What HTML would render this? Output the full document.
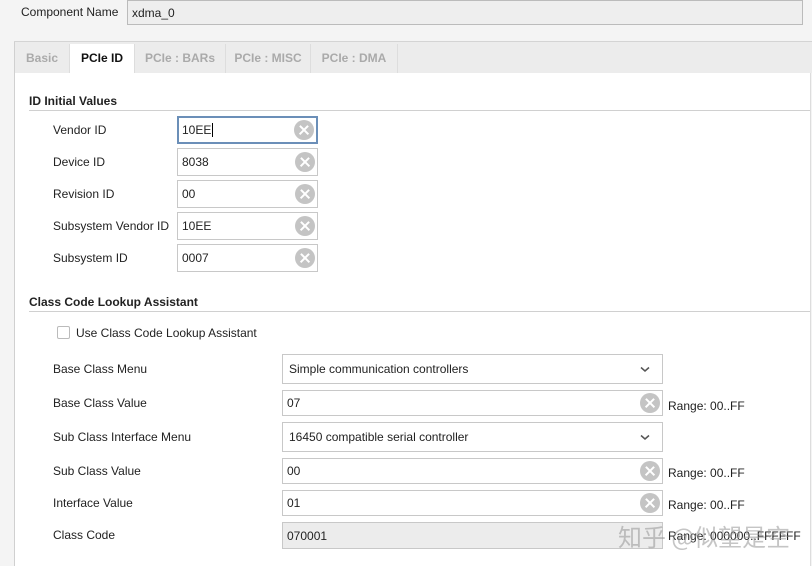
<!DOCTYPE html>
<html><head><meta charset="utf-8"><style>
*{box-sizing:border-box;margin:0;padding:0}
body{width:812px;height:566px;overflow:hidden;background:#f4f4f4;font-family:"Liberation Sans",Arial,sans-serif;font-size:12px;color:#222;position:relative}
.a{position:absolute}
.inp{position:absolute;background:#fff;border:1px solid #c8c8c8;padding-left:4px;display:flex;align-items:center;font-size:12px}
.x{position:absolute;right:2px;top:50%;margin-top:-10px;width:20px;height:20px;border-radius:50%;background:#c4c4c4}
.x:before,.x:after{content:"";position:absolute;left:4px;top:9px;width:12px;height:2.4px;background:#fff;transform:rotate(45deg)}
.x:after{transform:rotate(-45deg)}
.lbl{position:absolute;font-size:12px;color:#222}
.tab{position:absolute;top:44px;height:29px;font-size:12px;color:#aaa;padding-top:7px;text-align:center;border-right:1px solid #ddd;font-weight:bold}
.rng{position:absolute;left:668px;font-size:12px}
</style></head><body>
<div class="lbl" style="left:21px;top:5px">Component Name</div>
<div class="inp" style="left:127px;top:0;width:676px;height:25px;background:#eeeeee;border-color:#bbb;align-items:flex-start;padding-top:5px">xdma_0</div>
<div class="a" style="left:14px;top:41px;width:798px;height:32px;background:#ececec;border-top:1px solid #d4d4d4"></div>
<div class="a" style="left:14px;top:42px;width:798px;height:524px;border-left:1px solid #d0d0d0"></div>
<div class="tab" style="left:15px;width:55px">Basic</div>
<div class="tab" style="left:70px;width:65px;background:#fff;color:#111;height:30px">PCIe ID</div>
<div class="tab" style="left:135px;width:91px">PCIe : BARs</div>
<div class="tab" style="left:226px;width:85px">PCIe : MISC</div>
<div class="tab" style="left:311px;width:87px">PCIe : DMA</div>
<div class="a" style="left:15px;top:73px;width:795px;height:493px;background:#fff"></div>
<div class="a" style="left:810px;top:73px;width:1px;height:493px;background:#ddd"></div>

<div class="lbl" style="left:29px;top:94px;font-weight:bold">ID Initial Values</div>
<div class="a" style="left:29px;top:110px;width:781px;height:1px;background:#d0d0d0"></div>

<div class="lbl" style="left:53px;top:123px">Vendor ID</div>
<div class="inp" style="left:177px;top:116px;width:141px;height:28px;border:2px solid #6b8fb8;padding-left:3px">10EE<span style="border-left:1px solid #000;height:14px;margin-left:1px"></span><div class="x"></div></div>
<div class="lbl" style="left:53px;top:155px">Device ID</div>
<div class="inp" style="left:177px;top:148px;width:141px;height:28px">8038<div class="x"></div></div>
<div class="lbl" style="left:53px;top:187px">Revision ID</div>
<div class="inp" style="left:177px;top:180px;width:141px;height:28px">00<div class="x"></div></div>
<div class="lbl" style="left:53px;top:219px">Subsystem Vendor ID</div>
<div class="inp" style="left:177px;top:212px;width:141px;height:28px">10EE<div class="x"></div></div>
<div class="lbl" style="left:53px;top:251px">Subsystem ID</div>
<div class="inp" style="left:177px;top:244px;width:141px;height:28px">0007<div class="x"></div></div>

<div class="lbl" style="left:29px;top:295px;font-weight:bold">Class Code Lookup Assistant</div>
<div class="a" style="left:29px;top:311px;width:781px;height:1px;background:#d0d0d0"></div>
<div class="a" style="left:57px;top:326px;width:13px;height:13px;border:1px solid #bbb;border-radius:2px;background:#fff"></div>
<div class="lbl" style="left:76px;top:326px">Use Class Code Lookup Assistant</div>

<div class="lbl" style="left:53px;top:362px">Base Class Menu</div>
<div class="inp" style="left:282px;top:354px;width:381px;height:30px;padding-left:6px">Simple communication controllers<svg class="a" style="right:12px;top:11px" width="10" height="7" viewBox="0 0 10 7"><path d="M1 1.5L5 5L9 1.5" fill="none" stroke="#555" stroke-width="1.5"/></svg></div>
<div class="lbl" style="left:53px;top:396px">Base Class Value</div>
<div class="inp" style="left:282px;top:390px;width:381px;height:26px">07<div class="x"></div></div>
<div class="rng" style="top:399px">Range: 00..FF</div>
<div class="lbl" style="left:53px;top:430px">Sub Class Interface Menu</div>
<div class="inp" style="left:282px;top:422px;width:381px;height:30px;padding-left:6px">16450 compatible serial controller<svg class="a" style="right:12px;top:11px" width="10" height="7" viewBox="0 0 10 7"><path d="M1 1.5L5 5L9 1.5" fill="none" stroke="#555" stroke-width="1.5"/></svg></div>
<div class="lbl" style="left:53px;top:464px">Sub Class Value</div>
<div class="inp" style="left:282px;top:458px;width:381px;height:26px">00<div class="x"></div></div>
<div class="rng" style="top:466px">Range: 00..FF</div>
<div class="lbl" style="left:53px;top:496px">Interface Value</div>
<div class="inp" style="left:282px;top:490px;width:381px;height:26px">01<div class="x"></div></div>
<div class="rng" style="top:498px">Range: 00..FF</div>
<div class="lbl" style="left:53px;top:528px">Class Code</div>
<div class="inp" style="left:282px;top:522px;width:381px;height:27px;background:#ececec">070001</div>
<div class="rng" style="top:529px">Range: 000000..FFFFFF</div>
<div class="a" style="left:618px;top:518px;font-family:'Noto Sans CJK SC',sans-serif;font-size:24px;color:rgba(150,150,150,0.55)">知乎 @似望是空</div>
</body></html>
